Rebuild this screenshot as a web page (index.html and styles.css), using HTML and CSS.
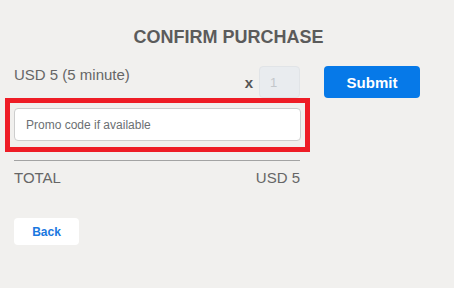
FILE: index.html
```html
<!DOCTYPE html>
<html lang="en">
<head>
<meta charset="utf-8">
<title>Confirm Purchase</title>
<link rel="stylesheet" href="styles.css">
</head>
<body>
<main class="page">
  <h1 class="title">CONFIRM PURCHASE</h1>
  <div class="layout">
    <div class="col">
      <div class="item-row">
        <span class="item">USD 5 (5 minute)</span>
        <span class="qty"><span class="times">x</span><input class="qty-input" type="text" value="1" disabled></span>
      </div>
      <div class="highlight">
        <input class="promo" type="text" placeholder="Promo code if available">
      </div>
      <div class="divider"></div>
      <div class="total-row"><span>TOTAL</span><span>USD 5</span></div>
    </div>
    <button class="submit" type="button">Submit</button>
  </div>
  <button class="back" type="button">Back</button>
</main>
</body>
</html>
```
FILE: styles.css
```css
* { box-sizing: border-box; }
html, body { margin: 0; padding: 0; }
body {
  background: #f1f0ee;
  font-family: "Liberation Sans", Arial, sans-serif;
  width: 454px;
  height: 288px;
  overflow: hidden;
}
.page {
  padding: 27px 0 0 14px;
}
.title {
  margin: 0;
  font-size: 18px;
  line-height: 21px;
  font-weight: bold;
  color: #5b5b5b;
  text-align: center;
  padding-right: 11px;
}
.layout {
  display: flex;
  align-items: flex-start;
  margin-top: 18px;
}
.col {
  width: 286px;
  display: flex;
  flex-direction: column;
}
.item-row {
  display: flex;
  justify-content: space-between;
  align-items: flex-start;
  height: 32px;
}
.item {
  font-size: 15px;
  line-height: 17px;
  color: #666;
}
.qty {
  display: flex;
  align-items: center;
  gap: 6px;
}
.times {
  font-size: 15px;
  font-weight: bold;
  color: #555;
  line-height: 17px;
  margin-top: 1px;
}
.qty-input {
  width: 41px;
  height: 32px;
  background: #e9ecef;
  border: 1px solid #e1e4e7;
  border-radius: 4px;
  color: #c3c7cb;
  font-family: "Liberation Sans", Arial, sans-serif;
  font-size: 13px;
  padding: 0 0 0 10px;
  margin: 0;
}
.highlight {
  margin: 0 -10px 0 -9px;
  border: 5px solid #ee1c25;
  padding: 5px 4px 6px 4px;
}
.promo {
  display: block;
  width: 100%;
  height: 33px;
  margin: 0;
  background: #fff;
  border: 1px solid #cdcdcd;
  border-radius: 4px;
  padding: 0 0 0 11px;
  font-family: "Liberation Sans", Arial, sans-serif;
  font-size: 12px;
  color: #555;
}
.promo::placeholder { color: #6b6f73; opacity: 1; }
.divider {
  margin-top: 8px;
  height: 1px;
  background: #a3a3a3;
}
.total-row {
  margin-top: 8px;
  display: flex;
  justify-content: space-between;
  font-size: 15px;
  line-height: 17px;
  color: #666;
}
.submit {
  margin-left: 24px;
  width: 96px;
  height: 32px;
  border: none;
  border-radius: 4px;
  background: #0679e8;
  color: #fff;
  font-family: "Liberation Sans", Arial, sans-serif;
  font-size: 15px;
  font-weight: bold;
  padding: 0;
}
.back {
  display: block;
  margin-top: 32px;
  width: 65px;
  height: 27px;
  border: none;
  border-radius: 4px;
  background: #fff;
  color: #1a78e0;
  font-family: "Liberation Sans", Arial, sans-serif;
  font-size: 12px;
  font-weight: bold;
  padding: 0;
}
```
